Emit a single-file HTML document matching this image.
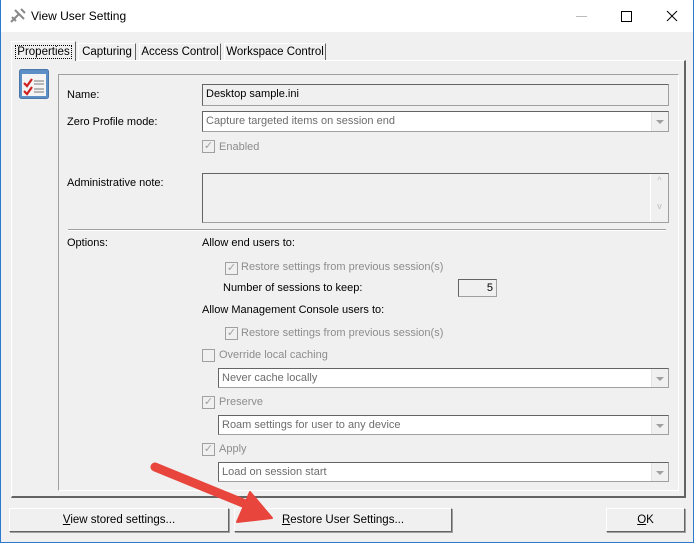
<!DOCTYPE html>
<html><head><style>
body{margin:0;width:694px;height:543px;overflow:hidden;background:#f0f0f0;font-family:"Liberation Sans",sans-serif;font-size:11px;color:#000;position:relative}
.a{position:absolute;white-space:nowrap}
.title{left:0;top:0;width:694px;height:32px;background:#fff}
.fld{position:absolute;border:1px solid #a0a0a0;border-top-color:#646464;border-left-color:#646464;box-sizing:border-box;background:#fff;color:#6d6d6d;padding:2px 3px;white-space:nowrap;line-height:14px}
.gray{background:#f0f0f0}
.dd{position:absolute;right:0;top:0;bottom:0;width:16px;border-left:1px solid #e3e3e3;background:#f0f0f0}
.dd:after{content:"";position:absolute;left:4px;top:8px;border-left:4px solid transparent;border-right:4px solid transparent;border-top:4px solid #a0a0a0}
.cb{position:absolute;width:11px;height:11px;border:1px solid #a0a0a0;background:#f0f0f0;font-size:11px;line-height:11px;color:#a0a0a0;text-align:center}
.dis{color:#8d8d8d}
.btn{position:absolute;height:24px;box-sizing:border-box;border:1px solid #fff;border-right-color:#646464;border-bottom-color:#646464;box-shadow:1px 1px 0 #a0a0a0;background:#f0f0f0;text-align:center;line-height:22px;font-size:11.5px;white-space:nowrap}
.tab{position:absolute;top:43px;height:17px;border:1px solid #fff;border-bottom:none;border-right:1px solid #646464;line-height:17px;font-size:11.5px;box-sizing:border-box;white-space:nowrap;text-align:center}
</style></head><body>
<div class="a title"></div>
<div class="a" style="left:0;top:0;width:1px;height:543px;background:#2b79d0"></div>
<div class="a" style="right:0;top:0;width:1px;height:543px;background:#2b79d0"></div>
<div class="a" style="left:0;bottom:0;width:694px;height:1px;background:#2b79d0"></div>
<svg class="a" style="left:9px;top:7px" width="18" height="18"><path d="M2 15 L10 7 M6 3 L15 12 M12 2 L16 6 M3 10 L7 14" stroke="#888" stroke-width="2" fill="none"/></svg>
<div class="a" style="left:31px;top:9px;font-size:12px">View User Setting</div>
<div class="a" style="left:576px;top:16px;width:11px;height:1px;background:#bbb"></div>
<div class="a" style="left:621px;top:11px;width:9px;height:9px;border:1px solid #000"></div>
<svg class="a" style="left:666px;top:10px" width="12" height="12"><path d="M1 1L11 11M11 1L1 11" stroke="#000" stroke-width="1"/></svg>

<div class="a" style="left:11px;top:60px;width:675px;height:438px;border:1px solid #fff;border-right:2px solid #646464;border-bottom:2px solid #646464;box-sizing:border-box"></div>
<div class="tab" style="left:11px;top:41px;height:20px;width:65px;background:#f0f0f0;line-height:20px"><span style="outline:1px dotted #000;padding:0 1px">Properties</span></div>
<div class="tab" style="left:78px;width:58px">Capturing</div>
<div class="tab" style="left:139px;width:82px">Access Control</div>
<div class="tab" style="left:224px;width:102px">Workspace Control</div>

<svg class="a" style="left:19px;top:69px" width="30" height="30"><rect x="0.5" y="0.5" width="29" height="29" rx="2" fill="#5b8fc6" stroke="#4a76a8"/><rect x="3" y="5" width="24" height="22" fill="#f4f4f4"/><path d="M5 14l3 3 5-7M5 22l3 3 5-7" stroke="#d02020" stroke-width="2.2" fill="none"/><path d="M15 12h10M15 15h10M15 20h10M15 23h10" stroke="#777"/></svg>

<div class="a" style="left:58px;top:74px;width:621px;height:417px;border:1px solid #a0a0a0;border-right-color:#fff;border-bottom-color:#fff;box-sizing:border-box"></div>

<div class="a" style="left:67px;top:89px">Name:</div>
<div class="fld gray" style="left:202px;top:84px;width:467px;height:22px;color:#000">Desktop sample.ini</div>
<div class="a" style="left:67px;top:116px">Zero Profile mode:</div>
<div class="fld" style="left:202px;top:111px;width:467px;height:21px">Capture targeted items on session end<div class="dd"></div></div>
<div class="cb" style="left:202px;top:140px">✓</div><div class="a dis" style="left:219px;top:141px">Enabled</div>
<div class="a" style="left:67px;top:177px">Administrative note:</div>
<div class="fld gray" style="left:202px;top:173px;width:467px;height:50px"><div style="position:absolute;right:0;top:0;bottom:0;width:17px;border-left:1px solid #fff;color:#bbb;font-size:9px;text-align:center;line-height:13px">^<br><br>v</div></div>
<div class="a" style="left:68px;top:229px;width:598px;height:1px;background:#a0a0a0;border-bottom:1px solid #fff"></div>
<div class="a" style="left:67px;top:237px">Options:</div>
<div class="a" style="left:202px;top:237px">Allow end users to:</div>
<div class="cb" style="left:225px;top:262px">✓</div><div class="a dis" style="left:241px;top:261px">Restore settings from previous session(s)</div>
<div class="a" style="left:223px;top:282px">Number of sessions to keep:</div>
<div class="fld gray" style="left:458px;top:279px;width:39px;height:18px;color:#000;text-align:right;padding:1px 3px">5</div>
<div class="a" style="left:202px;top:304px">Allow Management Console users to:</div>
<div class="cb" style="left:225px;top:327px">✓</div><div class="a dis" style="left:241px;top:327px">Restore settings from previous session(s)</div>
<div class="cb" style="left:202px;top:349px"></div><div class="a dis" style="left:219px;top:349px">Override local caching</div>
<div class="fld" style="left:218px;top:368px;width:451px;height:20px">Never cache locally<div class="dd"></div></div>
<div class="cb" style="left:202px;top:396px">✓</div><div class="a dis" style="left:219px;top:396px">Preserve</div>
<div class="fld" style="left:218px;top:415px;width:451px;height:20px">Roam settings for user to any device<div class="dd"></div></div>
<div class="cb" style="left:202px;top:443px">✓</div><div class="a dis" style="left:219px;top:443px">Apply</div>
<div class="fld" style="left:218px;top:462px;width:451px;height:20px">Load on session start<div class="dd"></div></div>

<div class="btn" style="left:9px;top:508px;width:220px"><u>V</u>iew stored settings...</div>
<div class="btn" style="left:234px;top:508px;width:218px"><u>R</u>estore User Settings...</div>
<div class="btn" style="left:606px;top:508px;width:79px"><u>O</u>K</div>

<svg class="a" style="left:0;top:0" width="694" height="543"><path d="M155 467 L248 505" stroke="#e8453c" stroke-width="9" stroke-linecap="round"/><path d="M250 492 L272 518 L237 522 Z" fill="#e8453c" stroke="#e8453c" stroke-width="2" stroke-linejoin="round"/></svg>
</body></html>
